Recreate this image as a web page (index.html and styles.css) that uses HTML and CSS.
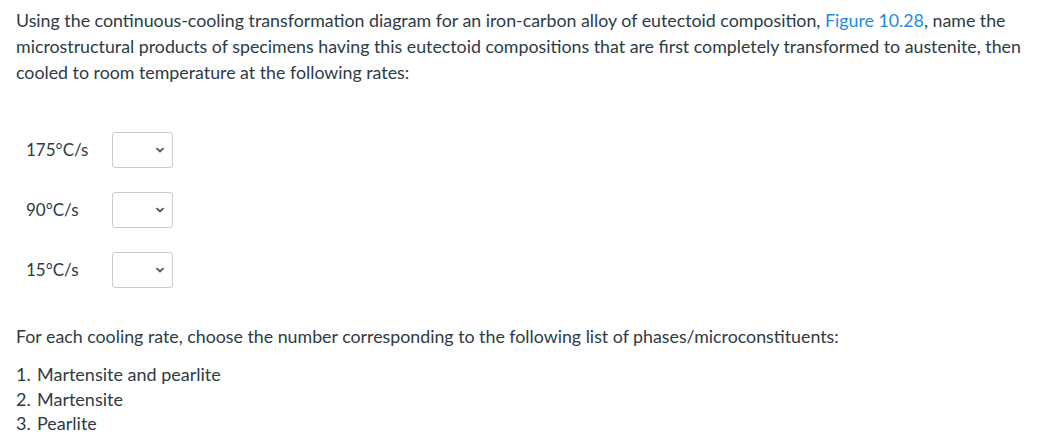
FILE: index.html
```html
<!DOCTYPE html>
<html>
<head>
<meta charset="utf-8">
<link rel="stylesheet" href="styles.css">
</head>
<body>
<div class="question">
  <p class="intro">Using the continuous-cooling transformation diagram for an iron-carbon alloy of eutectoid composition, <a class="link" href="#">Figure 10.28</a>, name the microstructural products of specimens having this eutectoid compositions that are first completely transformed to austenite, then cooled to room temperature at the following rates:</p>
  <div class="rows">
    <div class="row">
      <span class="label">175°C/s</span>
      <div class="select-wrap">
        <select class="select"><option></option><option>1</option><option>2</option><option>3</option></select>
        <svg class="chev" width="10" height="6" viewBox="0 0 10 6"><path d="M1.5 1.2 L5 4.5 L8.5 1.2" fill="none" stroke="#555" stroke-width="1.8"/></svg>
      </div>
    </div>
    <div class="row">
      <span class="label">90°C/s</span>
      <div class="select-wrap">
        <select class="select"><option></option><option>1</option><option>2</option><option>3</option></select>
        <svg class="chev" width="10" height="6" viewBox="0 0 10 6"><path d="M1.5 1.2 L5 4.5 L8.5 1.2" fill="none" stroke="#555" stroke-width="1.8"/></svg>
      </div>
    </div>
    <div class="row">
      <span class="label">15°C/s</span>
      <div class="select-wrap">
        <select class="select"><option></option><option>1</option><option>2</option><option>3</option></select>
        <svg class="chev" width="10" height="6" viewBox="0 0 10 6"><path d="M1.5 1.2 L5 4.5 L8.5 1.2" fill="none" stroke="#555" stroke-width="1.8"/></svg>
      </div>
    </div>
  </div>
  <p class="outro">For each cooling rate, choose the number corresponding to the following list of phases/microconstituents:</p>
  <ol class="list">
    <li>Martensite and pearlite</li>
    <li>Martensite</li>
    <li>Pearlite</li>
  </ol>
</div>
</body>
</html>
```
FILE: styles.css
```css
html, body {
  margin: 0;
  padding: 0;
  background: #ffffff;
}
body {
  font-family: Lato, "Open Sans", sans-serif;
  font-size: 17.8px;
  color: #2d3b45;
}
.question {
  padding: 7px 16px 0 16px;
}
.intro {
  margin: 0;
  line-height: 26px;
}
.link {
  color: #1f8ae0;
  text-decoration: none;
}
.rows {
  margin-top: 47px;
  padding-left: 10px;
  display: flex;
  flex-direction: column;
  gap: 24px;
}
.row {
  display: flex;
  align-items: center;
  height: 36px;
}
.label {
  width: 86px;
  line-height: 20px;
  font-size: 17px;
}
.select-wrap {
  position: relative;
  width: 61px;
  height: 36px;
}
.select {
  appearance: none;
  -webkit-appearance: none;
  width: 61px;
  height: 36px;
  box-sizing: border-box;
  border: 1px solid #c7cdd1;
  border-radius: 3px;
  background: #ffffff;
  margin: 0;
  font-family: inherit;
  font-size: 16px;
}
.chev {
  position: absolute;
  left: 43px;
  top: 15px;
  pointer-events: none;
}
.outro {
  margin: 35px 0 0 0;
  line-height: 26px;
}
.list {
  margin: 13px 0 0 0;
  padding-left: 0;
  list-style: none;
  line-height: 24.5px;
  font-size: 18px;
}
.list li::before {
  content: counter(list-item) ".";
  display: inline-block;
  width: 21px;
}
```
